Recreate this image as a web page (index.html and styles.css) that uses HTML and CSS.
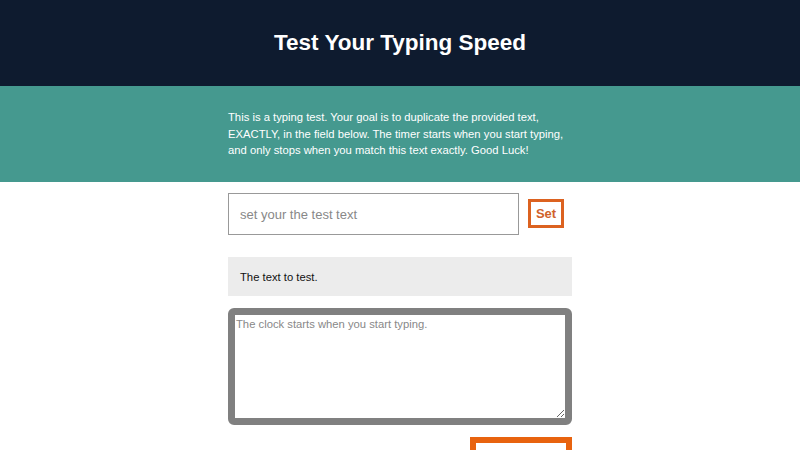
FILE: index.html
```html
<!DOCTYPE html>
<html lang="en">
<head>
<meta charset="utf-8">
<title>Test Your Typing Speed</title>
<link rel="stylesheet" href="styles.css">
</head>
<body>
<header class="masthead">
  <h1 class="title">Test Your Typing Speed</h1>
</header>
<section class="intro">
  <p class="intro-text">This is a typing test. Your goal is to duplicate the provided text, EXACTLY, in the field below. The timer starts when you start typing, and only stops when you match this text exactly. Good Luck!</p>
</section>
<main class="main">
  <div class="set-row">
    <input class="set-input" type="text" placeholder="set your the test text">
    <button class="set-btn" type="button">Set</button>
  </div>
  <div class="origin-text">The text to test.</div>
  <textarea class="test-area" placeholder="The clock starts when you start typing."></textarea>
  <div class="actions">
    <button class="reset-btn" type="button">Start over</button>
  </div>
</main>
</body>
</html>
```
FILE: styles.css
```css
* { box-sizing: border-box; }
html, body { margin: 0; padding: 0; }
body {
  font-family: "Liberation Sans", Arial, sans-serif;
  background: #fff;
  color: #111;
}
.masthead {
  background: #0e1b2f;
  height: 86px;
  display: flex;
  align-items: center;
  justify-content: center;
}
.title {
  margin: 0;
  color: #fff;
  font-size: 22.5px;
  font-weight: bold;
}
.intro {
  background: #45998f;
  height: 96px;
  display: flex;
  justify-content: center;
  padding-top: 23px;
}
.intro-text {
  margin: 0;
  width: 344px;
  color: #fff;
  font-size: 11.25px;
  line-height: 16.5px;
}
.main {
  width: 344px;
  margin: 0 auto;
  padding-top: 11px;
  display: flex;
  flex-direction: column;
}
.set-row {
  display: flex;
  align-items: center;
  gap: 9px;
}
.set-input {
  width: 291px;
  height: 42px;
  border: 1px solid #999;
  padding: 0 11px;
  font-family: inherit;
  font-size: 13px;
}
.set-input::placeholder { color: #888; }
.set-btn {
  width: 36px;
  height: 29px;
  margin-top: -1px;
  border: 3px solid #dc6220;
  background: #fff;
  color: #d0622a;
  font-family: inherit;
  font-weight: bold;
  font-size: 13px;
  padding: 0;
}
.origin-text {
  margin-top: 22px;
  height: 39px;
  background: #ececec;
  padding: 0 12px;
  display: flex;
  align-items: center;
  font-size: 11.25px;
  color: #111;
}
.test-area {
  margin-top: 12px;
  width: 344px;
  height: 117px;
  border: 7px solid #808080;
  border-radius: 6px;
  padding: 3px 1px;
  font-family: inherit;
  font-size: 11.25px;
  resize: vertical;
}
.test-area::placeholder { color: #888; }
.actions {
  display: flex;
  justify-content: flex-end;
  margin-top: 12px;
}
.reset-btn {
  width: 102px;
  height: 56px;
  border: 6px solid #e8630f;
  background: #fff;
  color: #e8630f;
  font-family: inherit;
  font-weight: bold;
  font-size: 13px;
}
```
